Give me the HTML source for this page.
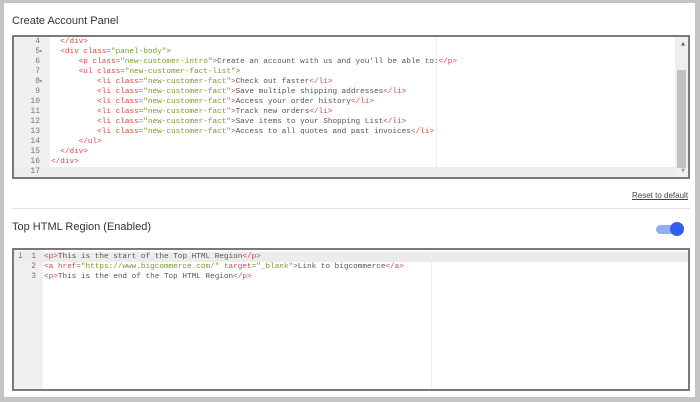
<!DOCTYPE html>
<html><head><meta charset="utf-8"><style>
*{margin:0;padding:0;box-sizing:border-box}
html,body{width:700px;height:402px;overflow:hidden;background:#c4c4c4}
#page{position:absolute;left:4px;top:3px;width:691px;height:394px;background:#fff}
.t{position:absolute;font-family:"Liberation Sans",Arial,sans-serif;font-size:11px;color:#333}
.ed{position:absolute;border:2px solid #7a7a7a;background:#fff;overflow:hidden}
.gut{position:absolute;left:0;top:0;bottom:0;background:#f0f0f0}
.code{position:absolute;font-family:"Liberation Mono",monospace;font-size:7.7px;line-height:10px;color:#555;white-space:pre}
.ln{position:absolute;font-family:"Liberation Mono",monospace;font-size:8px;line-height:10px;color:#777;text-align:right;white-space:pre}
.r{color:#d04a4a}.g{color:#789c28}
.pm{position:absolute;top:0;bottom:0;width:1px;background:#eee}
</style></head><body><div id="page">
<div class="t" style="left:8px;top:12px">Create Account Panel</div>
<div class="ed" style="left:8px;top:32px;width:678px;height:144px">
 <div class="gut" style="width:36px"></div>
 <div style="position:absolute;left:0;right:0;top:130px;height:10px;background:#ececec"></div>
 <div class="pm" style="left:422px"></div>
 <div class="ln" style="left:0;width:26px;top:0px">4
5
6
7
8
9
10
11
12
13
14
15
16
17</div>
 <div class="ln" style="left:25px;top:10px;font-size:6px;color:#777">▾


▾</div>
 <div class="code" style="left:37px;top:0px">  <span class="r">&lt;/div&gt;</span>
  <span class="r">&lt;div class</span><span class="g">="panel-body"</span><span class="r">&gt;</span>
      <span class="r">&lt;p class</span><span class="g">="new-customer-intro"</span><span class="r">&gt;</span>Create an account with us and you'll be able to:<span class="r">&lt;/p&gt;</span>
      <span class="r">&lt;ul class</span><span class="g">="new-customer-fact-list"</span><span class="r">&gt;</span>
          <span class="r">&lt;li class</span><span class="g">="new-customer-fact"</span><span class="r">&gt;</span>Check out faster<span class="r">&lt;/li&gt;</span>
          <span class="r">&lt;li class</span><span class="g">="new-customer-fact"</span><span class="r">&gt;</span>Save multiple shipping addresses<span class="r">&lt;/li&gt;</span>
          <span class="r">&lt;li class</span><span class="g">="new-customer-fact"</span><span class="r">&gt;</span>Access your order history<span class="r">&lt;/li&gt;</span>
          <span class="r">&lt;li class</span><span class="g">="new-customer-fact"</span><span class="r">&gt;</span>Track new orders<span class="r">&lt;/li&gt;</span>
          <span class="r">&lt;li class</span><span class="g">="new-customer-fact"</span><span class="r">&gt;</span>Save items to your Shopping List<span class="r">&lt;/li&gt;</span>
          <span class="r">&lt;li class</span><span class="g">="new-customer-fact"</span><span class="r">&gt;</span>Access to all quotes and past invoices<span class="r">&lt;/li&gt;</span>
      <span class="r">&lt;/ul&gt;</span>
  <span class="r">&lt;/div&gt;</span>
<span class="r">&lt;/div&gt;</span>
</div>
 <div style="position:absolute;right:0;top:0;width:13px;height:140px;background:#efefef"></div>
 <div style="position:absolute;right:2px;top:33px;width:9px;height:98px;background:#c1c1c1"></div>
 <div style="position:absolute;right:3px;top:4px;font-size:5px;color:#666;font-family:'DejaVu Sans',sans-serif">▲</div>
 <div style="position:absolute;right:3px;top:131px;font-size:5px;color:#999;font-family:'DejaVu Sans',sans-serif">▼</div>
</div>
<div class="t" style="left:628px;top:188px;font-size:8px;color:#444;text-decoration:underline">Reset to default</div>
<div style="position:absolute;left:8px;top:205px;width:678px;height:1px;background:#e2e2e2"></div>
<div class="t" style="left:8px;top:218px">Top HTML Region (Enabled)</div>
<div style="position:absolute;left:652px;top:222px;width:22px;height:9px;border-radius:5px;background:#94aef5"></div>
<div style="position:absolute;left:666px;top:219px;width:14px;height:14px;border-radius:50%;background:#3160ee"></div>
<div class="ed" style="left:8px;top:245px;width:678px;height:143px">
 <div class="gut" style="width:29px"></div>
 <div style="position:absolute;left:0;right:0;top:2px;height:10px;background:#ececec"></div>
 <div class="pm" style="left:417px"></div>
 <div class="ln" style="left:0;width:22px;top:2px">1
2
3</div>
 <div class="ln" style="left:4px;top:2px;text-align:left">i</div>
 <div class="code" style="left:30px;top:2px"><span class="r">&lt;p&gt;</span>This is the start of the Top HTML Region<span class="r">&lt;/p&gt;</span>
<span class="r">&lt;a href</span><span class="g">="https://www.bigcommerce.com/"</span> <span class="r">target</span><span class="g">="_blank"</span><span class="r">&gt;</span>Link to bigcommerce<span class="r">&lt;/a&gt;</span>
<span class="r">&lt;p&gt;</span>This is the end of the Top HTML Region<span class="r">&lt;/p&gt;</span></div>
</div>
</div></body></html>
